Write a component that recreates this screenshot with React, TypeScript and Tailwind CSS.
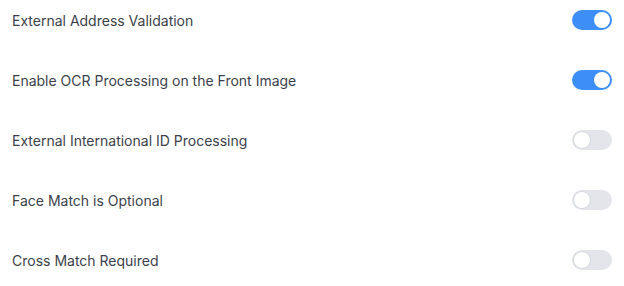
import React, { useState } from "react";

const items = [
  { label: "External Address Validation", on: true },
  { label: "Enable OCR Processing on the Front Image", on: true },
  { label: "External International ID Processing", on: false },
  { label: "Face Match is Optional", on: false },
  { label: "Cross Match Required", on: false },
];

function Toggle({ on, onClick }: { on: boolean; onClick: () => void }) {
  return (
    <button
      onClick={onClick}
      className={
        "relative w-[40px] h-[20px] rounded-full shrink-0 " +
        (on ? "bg-[#3e8ef7]" : "bg-[#e3e5ea]")
      }
    >
      <span
        className={
          "absolute top-[2px] w-[16px] h-[16px] rounded-full bg-white " +
          (on ? "left-[22px]" : "left-[2px] shadow-[0_0_0_1px_#d4d7dd]")
        }
      />
    </button>
  );
}

export default function App() {
  const [state, setState] = useState(items.map((i) => i.on));
  return (
    <div className="w-[624px] h-[286px] bg-white flex flex-col gap-5 px-3 font-['Inter',sans-serif]">
      {items.map((it, i) => (
        <div key={it.label} className="h-[40px] flex items-center justify-between">
          <span className="text-[14px] text-[#3b3f4a]">{it.label}</span>
          <Toggle
            on={state[i]}
            onClick={() => setState((s) => s.map((v, j) => (j === i ? !v : v)))}
          />
        </div>
      ))}
    </div>
  );
}
